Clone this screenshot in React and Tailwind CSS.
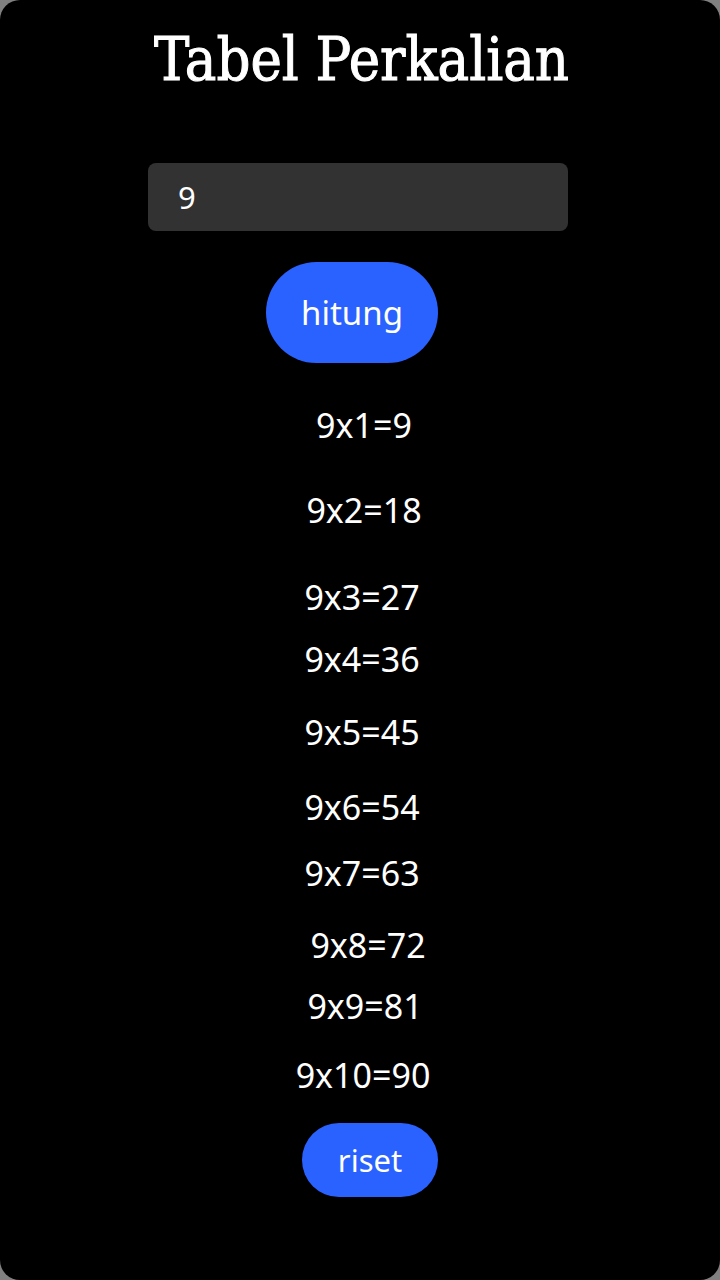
import { useState } from 'react';

const rows = [
  { n: 1, cls: 'mt-[42px] ml-[8px]' },
  { n: 2, cls: 'mt-[45px] ml-[8px]' },
  { n: 3, cls: 'mt-[47px] ml-[4px]' },
  { n: 4, cls: 'mt-[22px] ml-[4px]' },
  { n: 5, cls: 'mt-[33px] ml-[4px]' },
  { n: 6, cls: 'mt-[35px] ml-[4px]' },
  { n: 7, cls: 'mt-[26px] ml-[4px]' },
  { n: 8, cls: 'mt-[32px] ml-[16px]' },
  { n: 9, cls: 'mt-[21px] ml-[10px]' },
  { n: 10, cls: 'mt-[29px] ml-[6px]' },
];

export default function App() {
  const [angka, setAngka] = useState('9');

  return (
    <div className="min-h-[1280px] bg-[#808080]">
      <div className="flex h-[1280px] flex-col items-center rounded-[20px] bg-black text-white font-['Noto_Sans',sans-serif]">
        {/* Judul */}
        <h1 className="mt-[25px] ml-[3px] text-[59px] leading-[70px] font-['DejaVu_Serif',serif] font-stretch-condensed [-webkit-text-stroke:1px_white]">
          Tabel Perkalian
        </h1>

        {/* Input angka */}
        <input
          type="text"
          value={angka}
          onChange={e => setAngka(e.target.value)}
          className="mt-[68px] mr-[4px] h-[68px] w-[420px] rounded-[8px] bg-[#323232] pl-[30px] text-[31px] text-white outline-none"
        />

        <button className="mt-[31px] mr-[16px] h-[101px] w-[172px] rounded-full bg-[#2a62ff] text-[33px] text-white">
          hitung
        </button>

        {/* Hasil perkalian */}
        {rows.map(r => (
          <div key={r.n} className={`h-[40px] text-[34px] leading-[40px] ${r.cls}`}>
            9x{r.n}={9 * r.n}
          </div>
        ))}

        <button className="mt-[28px] ml-[20px] h-[74px] w-[136px] rounded-full bg-[#2a62ff] text-[31px] text-white">
          riset
        </button>
      </div>
    </div>
  );
}
